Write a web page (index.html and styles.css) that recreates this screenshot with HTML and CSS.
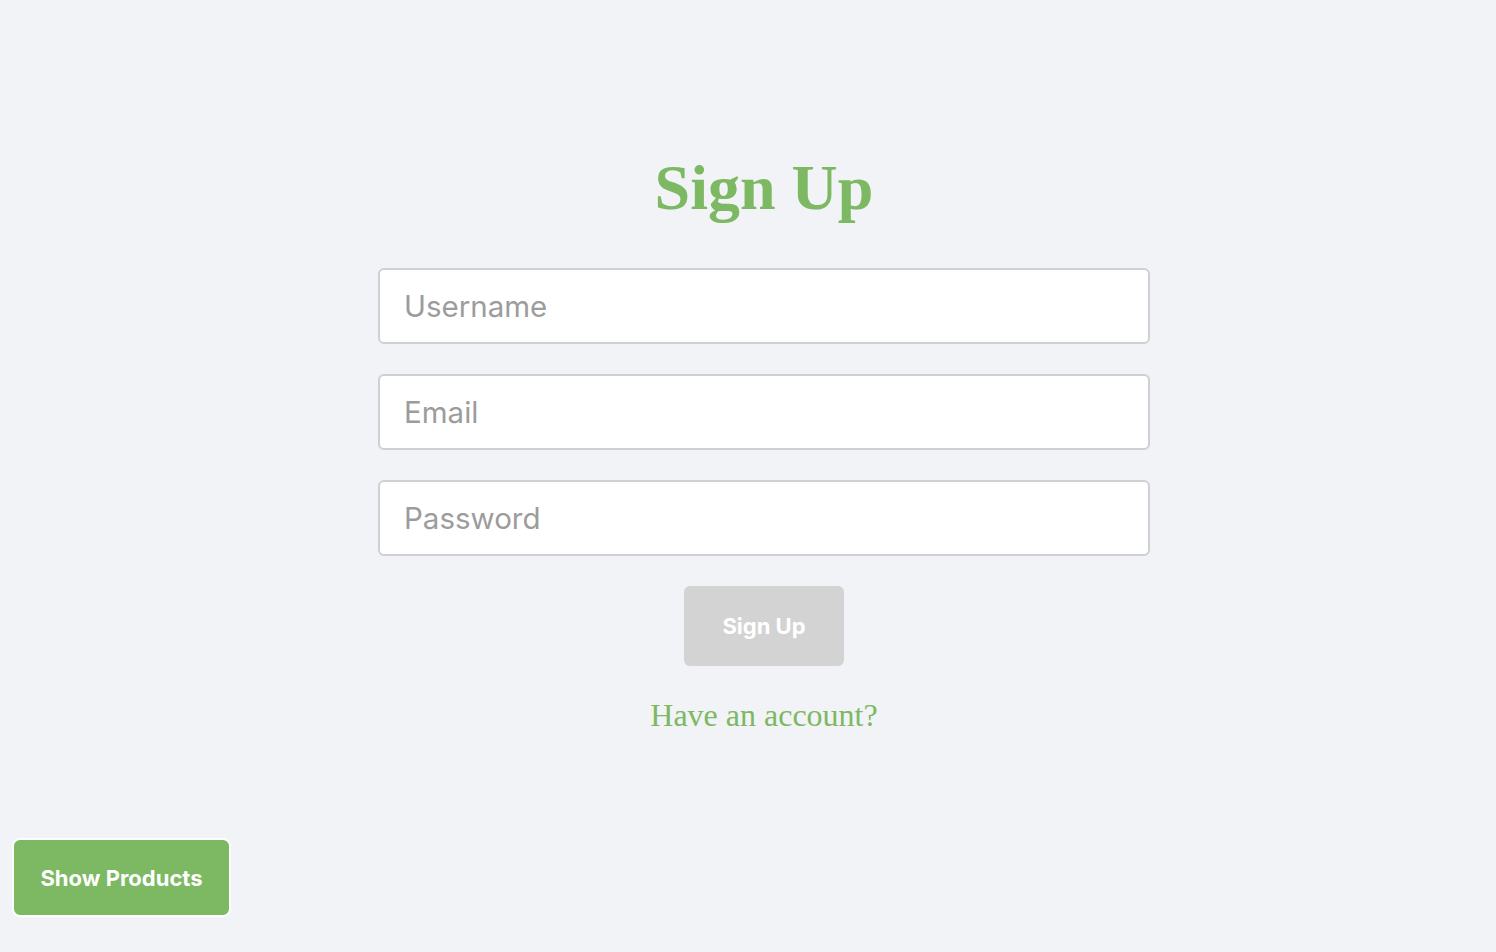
FILE: index.html
```html
<!DOCTYPE html>
<html lang="en">
<head>
<meta charset="utf-8">
<title>Sign Up</title>
<link rel="stylesheet" href="styles.css">
</head>
<body>
<main class="page">
  <form class="signup">
    <h1 class="title">Sign Up</h1>
    <input class="field" type="text" placeholder="Username">
    <input class="field" type="email" placeholder="Email">
    <input class="field" type="password" placeholder="Password">
    <button class="submit" type="button">Sign Up</button>
    <a class="login-link" href="#">Have an account?</a>
  </form>
</main>
<button class="show-products" type="button">Show Products</button>
</body>
</html>
```
FILE: styles.css
```css
html, body {
  margin: 0;
  padding: 0;
  background: #f1f3f7;
  height: 100%;
}
.page {
  display: flex;
  justify-content: center;
  padding-top: 156px;
  padding-left: 32px;
}
.signup {
  width: 772px;
  display: flex;
  flex-direction: column;
  align-items: center;
  gap: 30px;
}
.title {
  margin: 0 0 18px 0;
  font-family: "Liberation Serif", "Times New Roman", serif;
  font-weight: bold;
  font-size: 64px;
  line-height: 64px;
  color: #7db862;
}
.field {
  box-sizing: border-box;
  width: 100%;
  height: 76px;
  border: 2px solid #cfd0d3;
  border-radius: 6px;
  background: #fff;
  padding: 0 24px;
  font-family: Inter, "Liberation Sans", sans-serif;
  font-size: 29.5px;
  color: #333;
  outline: none;
}
.field::placeholder {
  color: #9c9c9c;
}
.submit {
  width: 160px;
  height: 80px;
  border: none;
  border-radius: 6px;
  background: #d3d3d3;
  color: #fff;
  font-family: Inter, "Liberation Sans", sans-serif;
  font-weight: 700;
  font-size: 22px;
  cursor: pointer;
}
.login-link {
  margin-top: 1px;
  font-family: "Liberation Serif", "Times New Roman", serif;
  font-size: 32px;
  line-height: 36px;
  color: #7db862;
  text-decoration: none;
}
.show-products {
  position: fixed;
  left: 12px;
  bottom: 35px;
  width: 219px;
  height: 79px;
  box-sizing: border-box;
  border: 2px solid #fff;
  border-radius: 8px;
  background: #7db862;
  color: #fff;
  font-family: Inter, "Liberation Sans", sans-serif;
  font-weight: 700;
  font-size: 22px;
  cursor: pointer;
}
```
